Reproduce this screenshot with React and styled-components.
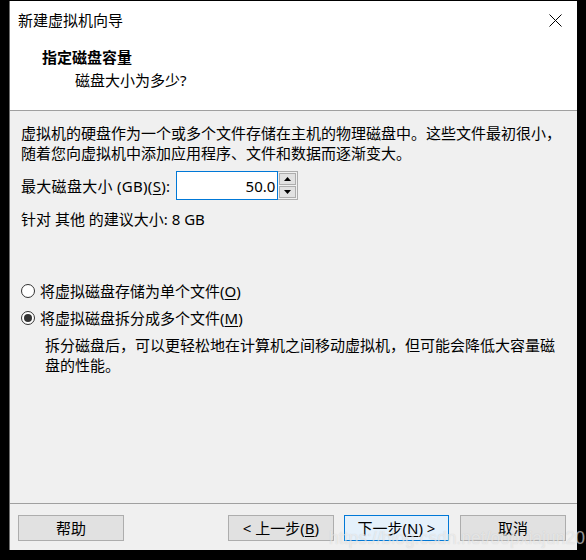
import React from "react";
import styled, { createGlobalStyle } from "styled-components";

const Global = createGlobalStyle`
  html, body { margin: 0; padding: 0; background: #000; }
  body { width: 586px; height: 560px; overflow: hidden; }
  * { box-sizing: border-box; }
`;

const FONT = `"Noto Sans", "Noto Sans CJK SC", sans-serif`;

const Screen = styled.div`
  position: relative;
  width: 586px;
  height: 560px;
  padding: 1px 0 0 9px;
  background: #000;
`;

const Window = styled.div`
  width: 568px;
  height: 549px;
  background: #f0f0f0;
  border-left: 1px solid #6e6e6e;
  display: flex;
  flex-direction: column;
  font-family: ${FONT};
  font-size: 15px;
  line-height: 20px;
  color: #000;
`;

const Header = styled.div`
  background: #fff;
  height: 110px;
  border-bottom: 1px solid #a0a0a0;
  display: flex;
  flex-direction: column;
`;

const TitleBar = styled.div`
  height: 38px;
  display: flex;
  align-items: center;
  justify-content: space-between;
  padding: 0 14px 0 8px;
`;

const TitleText = styled.span`
  font-size: 15px;
`;

const Close = styled.div`
  width: 16px;
  height: 16px;
  display: flex;
  align-items: center;
  justify-content: center;
`;

const HeadTitle = styled.div`
  margin-top: 8px;
  padding-left: 32px;
  font-weight: 700;
`;

const HeadSub = styled.div`
  margin-top: 3px;
  padding-left: 65px;
`;

const Body = styled.div`
  flex: 1;
  padding: 12px 11px 0 11px;
  display: flex;
  flex-direction: column;
`;

const Para = styled.div`
  white-space: nowrap;
`;

const SizeRow = styled.div`
  display: flex;
  align-items: center;
  margin-top: 8px;
  height: 29px;
`;

const Label = styled.span`
  margin-right: 6px;
  letter-spacing: 0.3px;
`;

const Input = styled.div`
  width: 102px;
  height: 29px;
  border: 1px solid #0078d7;
  background: #fff;
  display: flex;
  align-items: center;
  justify-content: flex-end;
  padding-right: 2px;
`;

const Spin = styled.div`
  display: flex;
  flex-direction: column;
  width: 20px;
  height: 29px;
  border: 1px solid #adadad;
  border-left: none;
`;

const SpinBtn = styled.div`
  flex: 1;
  background: #e1e1e1;
  border: 1px solid #adadad;
  margin: 1px;
  display: flex;
  align-items: center;
  justify-content: center;
  & + & { margin-top: 0; }
`;

const Suggest = styled.div`
  margin-top: 9px;
`;

const RadioRow = styled.label`
  display: flex;
  align-items: center;
  height: 20px;
  margin-top: ${(p) => p.$mt}px;
`;

const RadioCircle = styled.span`
  width: 14px;
  height: 14px;
  border-radius: 50%;
  border: 1px solid #333;
  background: #fff;
  margin-right: 5px;
  display: flex;
  align-items: center;
  justify-content: center;
  &::after {
    content: "";
    display: ${(p) => (p.$checked ? "block" : "none")};
    width: 8px;
    height: 8px;
    border-radius: 50%;
    background: #333;
  }
`;

const Desc = styled.div`
  margin-top: 7px;
  padding-left: 24px;
  width: 540px;
`;

const Footer = styled.div`
  height: 47px;
  border-top: 1px solid #a0a0a0;
  display: flex;
  align-items: flex-start;
  padding: 11px 10px 0 8px;
`;

const Button = styled.div`
  width: ${(p) => p.$w || 106}px;
  height: 26px;
  border: 1px solid ${(p) => (p.$primary ? "#0078d7" : "#adadad")};
  background: ${(p) => (p.$primary ? "#e5f1fb" : "#e1e1e1")};
  display: flex;
  align-items: center;
  justify-content: center;
  margin-left: ${(p) => p.$ml || 0}px;
  line-height: 20px;
`;

const U = styled.span`
  text-decoration: underline;
  text-underline-offset: 2px;
`;

const Watermark = styled.div`
  position: absolute;
  left: 329px;
  top: 528px;
  font-family: "Liberation Sans", Arial, sans-serif;
  font-size: 17.5px;
  color: rgba(255, 255, 255, 0.55);
  white-space: nowrap;
  pointer-events: none;
  text-shadow: 0 0 1px rgba(120, 120, 120, 0.3);
`;

export default function App() {
  return (
    <>
      <Global />
      <Screen>
        <Window>
          <Header>
            <TitleBar>
              <TitleText>新建虚拟机向导</TitleText>
              <Close>
                <svg width="13" height="13" viewBox="0 0 13 13">
                  <path d="M0.5 0.5 L12.5 12.5 M12.5 0.5 L0.5 12.5" stroke="#000" strokeWidth="1" fill="none" />
                </svg>
              </Close>
            </TitleBar>
            <HeadTitle>指定磁盘容量</HeadTitle>
            <HeadSub>磁盘大小为多少?</HeadSub>
          </Header>
          <Body>
            <Para>虚拟机的硬盘作为一个或多个文件存储在主机的物理磁盘中。这些文件最初很小，</Para>
            <Para>随着您向虚拟机中添加应用程序、文件和数据而逐渐变大。</Para>
            <SizeRow>
              <Label>
                最大磁盘大小 (GB)(<U>S</U>):
              </Label>
              <Input>50.0</Input>
              <Spin>
                <SpinBtn>
                  <svg width="7" height="4" viewBox="0 0 7 4">
                    <path d="M3.5 0 L7 4 L0 4 Z" fill="#000" />
                  </svg>
                </SpinBtn>
                <SpinBtn>
                  <svg width="7" height="4" viewBox="0 0 7 4">
                    <path d="M0 0 L7 0 L3.5 4 Z" fill="#000" />
                  </svg>
                </SpinBtn>
              </Spin>
            </SizeRow>
            <Suggest>针对 其他 的建议大小: 8 GB</Suggest>
            <RadioRow $mt={52}>
              <RadioCircle />
              将虚拟磁盘存储为单个文件(<U>O</U>)
            </RadioRow>
            <RadioRow $mt={7}>
              <RadioCircle $checked />
              将虚拟磁盘拆分成多个文件(<U>M</U>)
            </RadioRow>
            <Desc>
              拆分磁盘后，可以更轻松地在计算机之间移动虚拟机，但可能会降低大容量磁盘的性能。
            </Desc>
          </Body>
          <Footer>
            <Button>帮助</Button>
            <Button $ml={104}>
              &lt; 上一步(<U>B</U>)
            </Button>
            <Button $ml={10} $w={105} $primary>
              下一步(<U>N</U>) &gt;
            </Button>
            <Button $ml={11}>取消</Button>
          </Footer>
        </Window>
        <Watermark>https://blog.csdn.net/oopxiajun2011</Watermark>
      </Screen>
    </>
  );
}
